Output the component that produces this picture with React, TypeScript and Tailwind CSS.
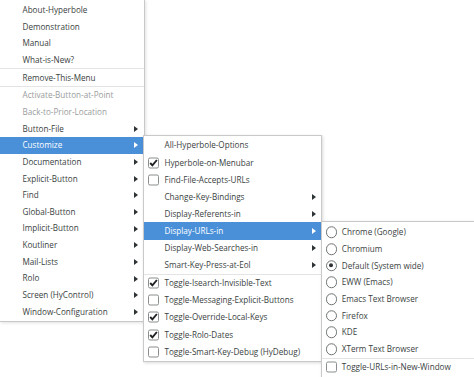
import React from "react";

type Item =
  | { kind: "sep" }
  | {
      kind: "item";
      label: string;
      sub?: boolean;
      disabled?: boolean;
      active?: boolean;
      check?: boolean;
      radio?: boolean;
    };

const mainMenu: Item[] = [
  { kind: "item", label: "About-Hyperbole" },
  { kind: "item", label: "Demonstration" },
  { kind: "item", label: "Manual" },
  { kind: "item", label: "What-is-New?" },
  { kind: "sep" },
  { kind: "item", label: "Remove-This-Menu" },
  { kind: "sep" },
  { kind: "item", label: "Activate-Button-at-Point", disabled: true },
  { kind: "item", label: "Back-to-Prior-Location", disabled: true },
  { kind: "item", label: "Button-File", sub: true },
  { kind: "item", label: "Customize", sub: true, active: true },
  { kind: "item", label: "Documentation", sub: true },
  { kind: "item", label: "Explicit-Button", sub: true },
  { kind: "item", label: "Find", sub: true },
  { kind: "item", label: "Global-Button", sub: true },
  { kind: "item", label: "Implicit-Button", sub: true },
  { kind: "item", label: "Koutliner", sub: true },
  { kind: "item", label: "Mail-Lists", sub: true },
  { kind: "item", label: "Rolo", sub: true },
  { kind: "item", label: "Screen (HyControl)", sub: true },
  { kind: "item", label: "Window-Configuration", sub: true },
];

const customizeMenu: Item[] = [
  { kind: "item", label: "All-Hyperbole-Options" },
  { kind: "item", label: "Hyperbole-on-Menubar", check: true },
  { kind: "item", label: "Find-File-Accepts-URLs", check: false },
  { kind: "item", label: "Change-Key-Bindings", sub: true },
  { kind: "item", label: "Display-Referents-in", sub: true },
  { kind: "item", label: "Display-URLs-in", sub: true, active: true },
  { kind: "item", label: "Display-Web-Searches-in", sub: true },
  { kind: "item", label: "Smart-Key-Press-at-Eol", sub: true },
  { kind: "sep" },
  { kind: "item", label: "Toggle-Isearch-Invisible-Text", check: true },
  { kind: "item", label: "Toggle-Messaging-Explicit-Buttons", check: false },
  { kind: "item", label: "Toggle-Override-Local-Keys", check: true },
  { kind: "item", label: "Toggle-Rolo-Dates", check: true },
  { kind: "item", label: "Toggle-Smart-Key-Debug (HyDebug)", check: false },
];

const urlMenu: Item[] = [
  { kind: "item", label: "Chrome (Google)", radio: false },
  { kind: "item", label: "Chromium", radio: false },
  { kind: "item", label: "Default (System wide)", radio: true },
  { kind: "item", label: "EWW (Emacs)", radio: false },
  { kind: "item", label: "Emacs Text Browser", radio: false },
  { kind: "item", label: "Firefox", radio: false },
  { kind: "item", label: "KDE", radio: false },
  { kind: "item", label: "XTerm Text Browser", radio: false },
  { kind: "sep" },
  { kind: "item", label: "Toggle-URLs-in-New-Window", check: false },
];

function Arrow({ white }: { white?: boolean }) {
  return (
    <svg width="4" height="7" viewBox="0 0 4 7" className="shrink-0">
      <path d="M0 0.5 L4 3.5 L0 6.5 Z" fill={white ? "#ffffff" : "#2e3436"} />
    </svg>
  );
}

function CheckBox({ on }: { on: boolean }) {
  return (
    <span className="w-[11px] h-[11px] rounded-[2px] border border-[#8b8e8f] bg-white flex items-center justify-center shrink-0">
      {on && (
        <svg width="9" height="9" viewBox="0 0 9 9">
          <path d="M1.2 4.5 L3.4 6.9 L7.9 1.5" fill="none" stroke="#1e2224" strokeWidth="1.9" />
        </svg>
      )}
    </span>
  );
}

function Radio({ on }: { on: boolean }) {
  return (
    <span className="w-[11.5px] h-[11.5px] rounded-full border border-[#6f7373] bg-white flex items-center justify-center shrink-0">
      {on && <span className="w-[4px] h-[4px] rounded-full bg-[#2e3436]" />}
    </span>
  );
}

function MenuRows({
  items,
  rowH,
  textPad,
  iconPad,
  arrowRight,
}: {
  items: Item[];
  rowH: string;
  textPad: string;
  iconPad: string;
  arrowRight: string;
}) {
  return (
    <>
      {items.map((it, i) => {
        if (it.kind === "sep") {
          return <div key={i} className="h-px bg-[#e4e4e4]" />;
        }
        const color = it.active
          ? "text-white bg-[#4a90d9]"
          : it.disabled
          ? "text-[#9a9d9d]"
          : "text-[#3a3f41]";
        return (
          <div key={i} className={`relative flex items-center ${rowH} ${color}`}>
            {(it.check !== undefined || it.radio !== undefined) && (
              <span className={`absolute top-1/2 -translate-y-1/2 ${iconPad}`}>
                {it.radio !== undefined ? <Radio on={it.radio} /> : <CheckBox on={!!it.check} />}
              </span>
            )}
            <span className={`${textPad} whitespace-nowrap leading-none`}>{it.label}</span>
            {it.sub && (
              <span className={`absolute top-1/2 -translate-y-1/2 ${arrowRight} flex`}>
                <Arrow white={it.active} />
              </span>
            )}
          </div>
        );
      })}
    </>
  );
}

export default function App() {
  return (
    <div
      className="relative w-[474px] h-[377px] overflow-hidden bg-white text-[8.15px]"
      style={{ fontFamily: '"Open Sans", "Noto Sans", sans-serif' }}
    >
      {/* Hyperbole main menu */}
      <div className="w-[145px] bg-white border-r border-b border-[#c9c9c9] pt-[1.7px] pb-[1.3px] shadow-[1px_1px_3px_rgba(0,0,0,0.12)]">
        <MenuRows
          items={mainMenu}
          rowH="h-[16.67px]"
          textPad="pl-[22.5px]"
          iconPad="left-[4px]"
          arrowRight="left-[134px]"
        />
      </div>

      {/* Customize submenu */}
      <div className="absolute left-[143px] top-[135px] w-[179px] bg-white border border-[#c9c9c9] py-[1px] shadow-[1px_1px_3px_rgba(0,0,0,0.15)]">
        <MenuRows
          items={customizeMenu}
          rowH="h-[17.1px]"
          textPad="pl-[20.5px]"
          iconPad="left-[4.3px]"
          arrowRight="left-[168px]"
        />
      </div>

      {/* Display-URLs-in submenu */}
      <div className="absolute left-[321px] top-[221px] w-[160px] bg-white border border-[#c9c9c9] pt-[2px] pb-[2px] shadow-[1px_1px_3px_rgba(0,0,0,0.15)]">
        <MenuRows
          items={urlMenu}
          rowH="h-[16.7px]"
          textPad="pl-[19.8px]"
          iconPad="left-[3.5px]"
          arrowRight="left-[150px]"
        />
      </div>
    </div>
  );
}
